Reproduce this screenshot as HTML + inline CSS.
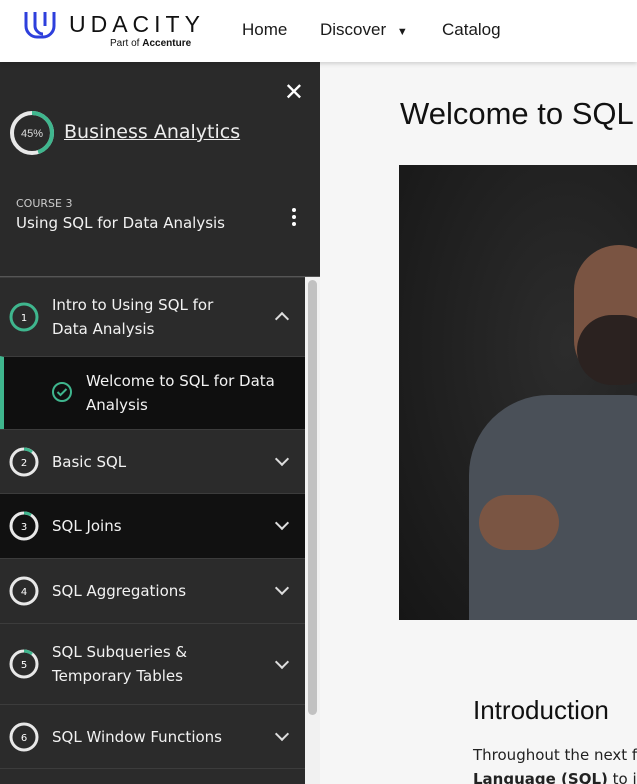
<!DOCTYPE html>
<html style="overflow:hidden;width:637px;height:784px"><head><meta charset="utf-8"><style>
*{margin:0;padding:0;box-sizing:border-box}
body{width:637px;height:784px;overflow:hidden;background:#f6f6f6;font-family:"Liberation Sans",sans-serif;position:relative}
.top{position:absolute;left:0;top:0;width:637px;height:62px;background:#fff;box-shadow:0 2px 4px rgba(0,0,0,.15);z-index:5}
.nav{position:absolute;top:20px;font-size:17px;color:#1a1a1a}
.side{position:absolute;left:0;top:62px;width:320px;height:722px;background:#2a2a2a;color:#fff;font-family:"DejaVu Sans","Liberation Sans",sans-serif;overflow:hidden}
.row{position:absolute;left:0;width:305px;border-top:1px solid #3c3c3c;background:#2b2b2b}
.row .t{position:absolute;left:52px;font-size:15px;line-height:24px;color:#f2f2f2}
.row .c{position:absolute;left:9px;width:30px;height:30px}
.chev{position:absolute;right:18px;width:10px;height:10px;border-right:2px solid #ddd;border-bottom:2px solid #ddd;transform:rotate(45deg)}
.main{position:absolute;left:320px;top:62px;width:317px;height:722px;overflow:hidden}
</style></head><body>
<div class="top">
<svg style="position:absolute;left:23px;top:9px" width="34" height="32" viewBox="0 0 34 32"><path d="M3 3v14c0 6 5 11 11 11h6c6 0 11-5 11-11V3M12 3v14c0 4 4 8 8 8M22 3v14" fill="none" stroke="#2e3fdc" stroke-width="3"/></svg>
<div style="position:absolute;left:69px;top:11px;font-size:23px;letter-spacing:5px;color:#111">UDACITY</div>
<div style="position:absolute;left:110px;top:38px;font-size:10px;color:#111">Part of <b>Accenture</b></div>
<div class="nav" style="left:242px">Home</div>
<div class="nav" style="left:320px">Discover <span style="font-size:11px;margin-left:6px">▼</span></div>
<div class="nav" style="left:442px">Catalog</div>
</div>
<div class="side">
<div style="position:absolute;right:16px;top:18px;font-size:24px;color:#fff;line-height:24px">✕</div>
<svg style="position:absolute;left:9px;top:48px" width="46" height="46"><circle cx="23" cy="23" r="20" fill="none" stroke="#e8e8e8" stroke-width="4"/><circle cx="23" cy="23" r="20" fill="none" stroke="#3fb68e" stroke-width="4" stroke-dasharray="56.5 200" transform="rotate(-90 23 23)"/><text x="23" y="27" font-size="11" fill="#ddd" text-anchor="middle" font-family="Liberation Sans">45%</text></svg>
<div style="position:absolute;left:64px;top:59px;font-size:19px;text-decoration:underline;color:#eee">Business Analytics</div>
<div style="position:absolute;left:16px;top:135px;font-size:11px;color:#ccc">COURSE 3</div>
<div style="position:absolute;left:16px;top:152px;font-size:15px;color:#f2f2f2">Using SQL for Data Analysis</div>
<div style="position:absolute;left:292px;top:146px;width:4px;font-size:0">
<div style="width:4px;height:4px;background:#fff;border-radius:2px;margin-bottom:3px"></div><div style="width:4px;height:4px;background:#fff;border-radius:2px;margin-bottom:3px"></div><div style="width:4px;height:4px;background:#fff;border-radius:2px"></div></div>
<div style="position:absolute;left:0;top:214px;width:320px;height:1px;background:#555"></div>
<div class="row" style="top:215px;height:79px"><svg class="c" style="top:24px"><circle cx="15" cy="15" r="13" fill="none" stroke="#3fb68e" stroke-width="3"/><text x="15" y="19" font-size="10" fill="#fff" text-anchor="middle">1</text></svg><div class="t" style="top:15px">Intro to Using SQL for<br>Data Analysis</div><div class="chev" style="top:36px;transform:rotate(-135deg)"></div></div>
<div class="row" style="top:294px;height:73px;background:#0f0f0f;border-left:4px solid #3fb68e"><svg style="position:absolute;left:47px;top:24px" width="22" height="22"><circle cx="11" cy="11" r="9" fill="none" stroke="#3fb68e" stroke-width="2"/><path d="M6.5 11l3 3 6-6" fill="none" stroke="#3fb68e" stroke-width="2"/></svg><div class="t" style="left:82px;top:12px">Welcome to SQL for Data<br>Analysis</div></div>
<div class="row" style="top:367px;height:64px"><svg class="c" style="top:17px"><circle cx="15" cy="15" r="13" fill="none" stroke="#e8e8e8" stroke-width="3"/><path d="M15 2a13 13 0 0 1 8 3" fill="none" stroke="#3fb68e" stroke-width="3"/><text x="15" y="19" font-size="10" fill="#fff" text-anchor="middle">2</text></svg><div class="t" style="top:20px">Basic SQL</div><div class="chev" style="top:24px"></div></div>
<div class="row" style="top:431px;height:65px;background:#111"><svg class="c" style="top:17px"><circle cx="15" cy="15" r="13" fill="none" stroke="#e8e8e8" stroke-width="3"/><path d="M15 2a13 13 0 0 1 7 2" fill="none" stroke="#3fb68e" stroke-width="3"/><text x="15" y="19" font-size="10" fill="#fff" text-anchor="middle">3</text></svg><div class="t" style="top:20px">SQL Joins</div><div class="chev" style="top:24px"></div></div>
<div class="row" style="top:496px;height:65px"><svg class="c" style="top:17px"><circle cx="15" cy="15" r="13" fill="none" stroke="#e8e8e8" stroke-width="3"/><text x="15" y="19" font-size="10" fill="#fff" text-anchor="middle">4</text></svg><div class="t" style="top:20px">SQL Aggregations</div><div class="chev" style="top:24px"></div></div>
<div class="row" style="top:561px;height:81px"><svg class="c" style="top:25px"><circle cx="15" cy="15" r="13" fill="none" stroke="#e8e8e8" stroke-width="3"/><path d="M15 2a13 13 0 0 1 8 3" fill="none" stroke="#3fb68e" stroke-width="3"/><text x="15" y="19" font-size="10" fill="#fff" text-anchor="middle">5</text></svg><div class="t" style="top:16px">SQL Subqueries &amp;<br>Temporary Tables</div><div class="chev" style="top:33px"></div></div>
<div class="row" style="top:642px;height:64px"><svg class="c" style="top:17px"><circle cx="15" cy="15" r="13" fill="none" stroke="#e8e8e8" stroke-width="3"/><text x="15" y="19" font-size="10" fill="#fff" text-anchor="middle">6</text></svg><div class="t" style="top:20px">SQL Window Functions</div><div class="chev" style="top:24px"></div></div>
<div class="row" style="top:706px;height:20px"></div>
<div style="position:absolute;left:305px;top:215px;width:15px;height:507px;background:#f1f1f1"></div>
<div style="position:absolute;left:308px;top:218px;width:9px;height:435px;background:#c1c1c1;border-radius:5px"></div>
</div>
<div class="main">
<div style="position:absolute;left:80px;top:34px;font-size:31px;color:#111;white-space:nowrap">Welcome to SQL for Data Analysis</div>
<div style="position:absolute;left:79px;top:103px;width:238px;height:455px;background:radial-gradient(ellipse at 70% 40%,#2c2c2c,#161616);overflow:hidden">
<div style="position:absolute;left:175px;top:80px;width:90px;height:140px;border-radius:45px;background:#7a5442"></div>
<div style="position:absolute;left:178px;top:150px;width:80px;height:70px;border-radius:40px;background:#2b2220"></div>
<div style="position:absolute;left:70px;top:230px;width:200px;height:240px;border-radius:80px 40px 0 0;background:#4a5058"></div>
<div style="position:absolute;left:80px;top:330px;width:80px;height:55px;border-radius:30px;background:#7a5543"></div>
</div>
<div style="position:absolute;left:153px;top:633px;font-size:26px;color:#111;white-space:nowrap">Introduction</div>
<div style="position:absolute;left:153px;top:681px;font-size:15px;color:#222;line-height:24px;white-space:nowrap;font-family:'DejaVu Sans',sans-serif">Throughout the next few lessons<br><b>Language (SQL)</b> to interact</div>
</div>
</body></html>
